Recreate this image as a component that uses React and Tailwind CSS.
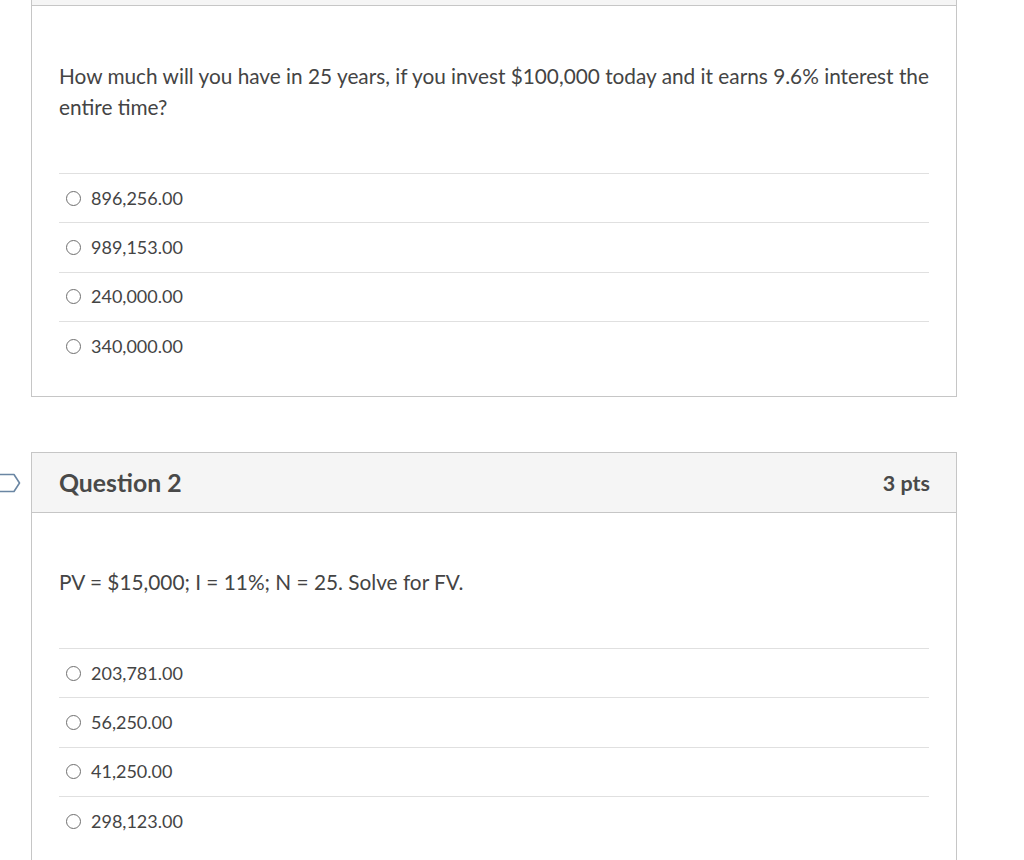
import React from "react";

const Radio = () => (
  <span className="inline-block w-[15px] h-[15px] rounded-full border border-[#6f6f6f] bg-white shrink-0" />
);

const QuestionCard = ({ title, pts, text, options, className = "" }) => {
  return (
    <div className={`relative ${className}`}>
      {title && (
        // bookmark flag
        <svg
          className="absolute left-0 top-[20px]"
          width="22"
          height="22"
          viewBox="0 0 22 22"
          fill="none"
        >
          <path d="M-2 2.5 H14 L19.5 11 L14 19.5 H-2" stroke="#6a86a3" strokeWidth="1.6" strokeLinejoin="round" />
        </svg>
      )}
      <div className="ml-[31px] w-[926px] border border-[#c6c6c6] bg-white">
        {title ? (
          <div className="h-[60px] bg-[#f5f5f5] border-b border-[#c6c6c6] flex items-center justify-between pl-[27px] pr-[26px]">
            <h2 className="text-[24.8px] font-bold text-[#494949]">{title}</h2>
            <span className="text-[21.5px] font-bold text-[#494949]">{pts}</span>
          </div>
        ) : (
          <div className="h-[6px] bg-[#f5f5f5] border-b border-[#c6c6c6]" />
        )}
        <div className={`${title ? "pt-[53px]" : "pt-[54px]"} px-[27px] pb-[26px]`}>
          <p className="text-[20.8px] leading-[31px] text-[#444]">{text}</p>
          <div className="mt-[51px]">
            {options.map((o) => (
              <div key={o} className="h-[49.3px] border-t border-[#e0e0e0] flex items-center pl-[7px] gap-[10px]">
                <Radio />
                <span className="text-[18px] text-[#444]">{o}</span>
              </div>
            ))}
          </div>
        </div>
      </div>
    </div>
  );
};

export default function App() {
  return (
    <div
      className="w-[1024px] h-[860px] overflow-hidden bg-white"
      style={{ fontFamily: "Lato, 'Open Sans', sans-serif" }}
    >
      <div className="-mt-[1px]">
        <QuestionCard
          text="How much will you have in 25 years, if you invest $100,000 today and it earns 9.6% interest the entire time?"
          options={["896,256.00", "989,153.00", "240,000.00", "340,000.00"]}
        />
        <QuestionCard
          className="mt-[55px]"
          title="Question 2"
          pts="3 pts"
          text="PV = $15,000; I = 11%; N = 25. Solve for FV."
          options={["203,781.00", "56,250.00", "41,250.00", "298,123.00"]}
        />
      </div>
    </div>
  );
}
